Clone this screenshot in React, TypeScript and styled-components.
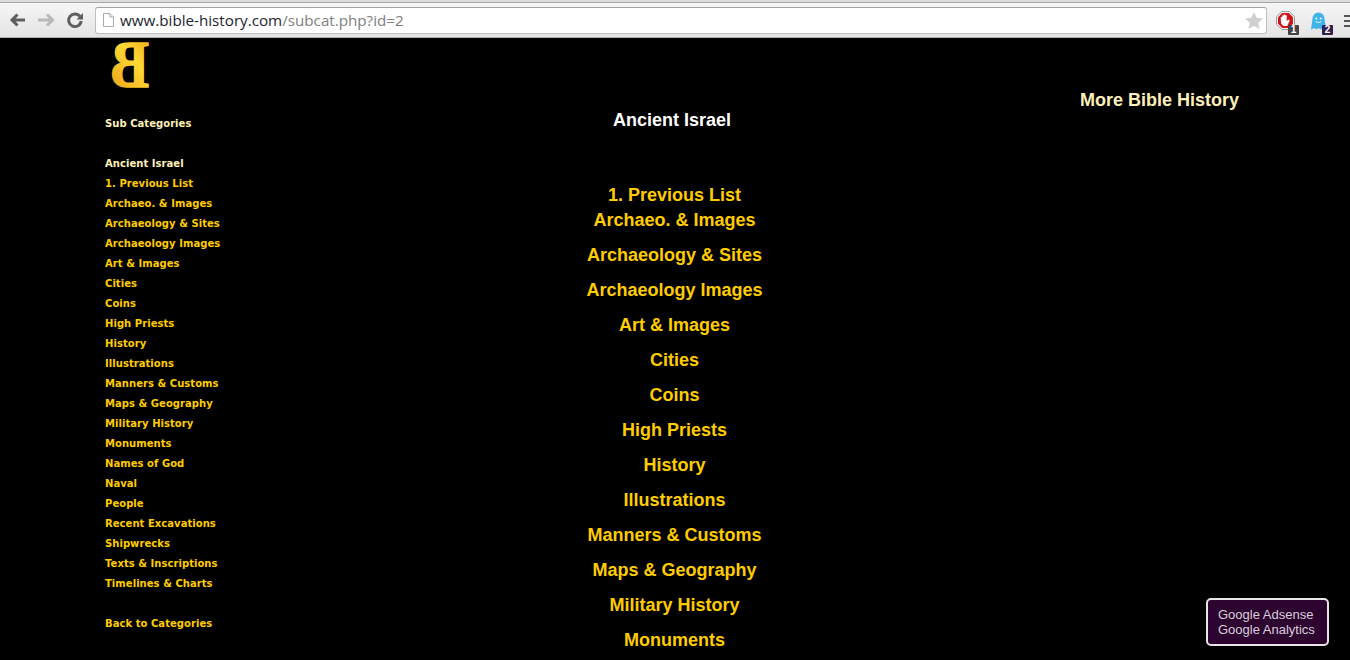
import React from 'react';
import styled, { createGlobalStyle } from 'styled-components';

const GlobalStyle = createGlobalStyle`
  html, body {
    margin: 0;
    height: 100%;
    overflow: hidden;
    background: #000;
  }
`;

const Page = styled.div`
  width: 1350px;
  height: 660px;
  overflow: hidden;
  display: flex;
  flex-direction: column;
  background: #000;
`;

const TabStrip = styled.div`
  height: 3px;
  flex: 0 0 3px;
  background: #dcdcdc;
  border-bottom: 1px solid #a8a8a8;
  box-sizing: border-box;
`;

const Toolbar = styled.div`
  flex: 0 0 35px;
  display: flex;
  align-items: center;
  box-sizing: border-box;
  padding-left: 8px;
  background: linear-gradient(#f6f6f6, #e4e4e4);
  border-bottom: 1px solid #b0b0b0;
`;

const NavIcon = styled.svg`
  width: 18px;
  height: 18px;
  margin-right: 11px;
  flex: none;
`;

const UrlBar = styled.div`
  width: 1172px;
  height: 27px;
  box-sizing: border-box;
  display: flex;
  align-items: center;
  gap: 6px;
  padding: 0 3px 0 7px;
  background: #fff;
  border: 1px solid #bdbdbd;
  border-top-color: #a3a3a3;
  border-radius: 3px;
  font: 15.2px 'Open Sans', 'Liberation Sans', sans-serif;
`;

const Url = styled.span`
  flex: 1;
  color: #808080;
  white-space: nowrap;
`;

const Host = styled.span`
  color: #1c2430;
`;

const ExtensionSlot = styled.div<{ $left: number }>`
  position: relative;
  flex: none;
  width: 18px;
  height: 19px;
  margin-left: ${(p) => p.$left}px;
`;

const Badge = styled.span<{ $bg: string }>`
  position: absolute;
  right: -5px;
  bottom: -5px;
  width: 11px;
  height: 10px;
  background: ${(p) => p.$bg};
  color: #fff;
  font: bold 10px/10px 'Liberation Sans', sans-serif;
  text-align: center;
  border-radius: 1px;
`;

const Content = styled.div`
  flex: 1;
  display: grid;
  grid-template-columns: 299.5px 540px 1fr;
  padding-left: 105px;
  min-height: 0;
`;

const Sidebar = styled.nav`
  display: flex;
  flex-direction: column;
  font: bold 10px/20px 'DejaVu Sans', Verdana, sans-serif;
  letter-spacing: 0.05px;
  color: #ffcc00;
`;

const Logo = styled.svg`
  width: 46px;
  height: 50px;
  margin: 3px 0 23px 5px;
  display: block;
  flex: none;
`;

const SideItem = styled.div<{ $gap?: number; $pale?: boolean }>`
  height: 20px;
  white-space: nowrap;
  margin-bottom: ${(p) => p.$gap || 0}px;
  color: ${(p) => (p.$pale ? '#fff0b8' : '#ffcc00')};
`;

const Main = styled.main`
  display: flex;
  flex-direction: column;
  align-items: center;
  font: bold 18px/25px 'Liberation Sans', Arial, sans-serif;
  color: #ffcc00;
  padding-top: 70px;
`;

const Title = styled.div`
  color: #fff;
  margin: 0 5px 0 0;
  height: 25px;
`;

const PreviousLink = styled.div`
  margin-top: 50px;
  height: 25px;
`;

const MainLink = styled.div`
  height: 35px;
`;

const Aside = styled.aside`
  padding: 50px 0 0 135.5px;
  font: bold 18px/25px 'Liberation Sans', Arial, sans-serif;
  color: #fff0b8;
  white-space: nowrap;
`;

const AdBox = styled.div`
  position: fixed;
  left: 1206px;
  top: 598px;
  width: 123px;
  height: 48px;
  box-sizing: border-box;
  padding: 7px 0 0 10px;
  background: #2d0330;
  border: 2px solid #e8e4e8;
  border-radius: 5px;
  color: #d8d0d8;
  font: 13px/15px 'Liberation Sans', Arial, sans-serif;
  white-space: nowrap;
`;

const MenuLines = styled.div`
  position: absolute;
  left: 1344px;
  top: 15px;
  width: 8px;
  height: 12px;
  background: repeating-linear-gradient(#555 0 2px, transparent 2px 5px);
`;

const categories = [
  'Archaeo. & Images',
  'Archaeology & Sites',
  'Archaeology Images',
  'Art & Images',
  'Cities',
  'Coins',
  'High Priests',
  'History',
  'Illustrations',
  'Manners & Customs',
  'Maps & Geography',
  'Military History',
  'Monuments',
  'Names of God',
  'Naval',
  'People',
  'Recent Excavations',
  'Shipwrecks',
  'Texts & Inscriptions',
  'Timelines & Charts',
];

export default function App() {
  return (
    <Page>
      <GlobalStyle />
      <TabStrip />
      <Toolbar>
        <NavIcon viewBox="0 0 18 18">
          <path d="M17 9H5M9.500 3.500 4 9l5.500 5.500" fill="none" stroke="#5f5f5f" strokeWidth="3" />
        </NavIcon>
        <NavIcon viewBox="0 0 18 18">
          <path d="M1 9h13M10 3.500 15.500 9 10 14.500" fill="none" stroke="#b8b8b8" strokeWidth="3" />
        </NavIcon>
        <NavIcon viewBox="0 0 18 18">
          <path d="M14 5.500A6.300 6.300 0 1 0 15.200 10" fill="none" stroke="#5f5f5f" strokeWidth="3" />
          <path d="M17 2v6.500h-6.500z" fill="#5f5f5f" />
        </NavIcon>
        <UrlBar>
          <svg width="11" height="14" viewBox="0 0 11 14">
            <path d="M.5.500h6.500l3.500 3.500v9.500H.5z" fill="#fff" stroke="#aaa" />
            <path d="M7 .5V4h3.500" fill="#eee" stroke="#aaa" />
          </svg>
          <Url>
            <Host>www.bible-history.com</Host>/subcat.php?id=2
          </Url>
          <svg width="18" height="17" viewBox="0 0 18 17">
            <path d="M9 0l2.700 5.800 6.300.7-4.700 4.300 1.300 6.200L9 13.900 3.400 17l1.300-6.200L0 6.500l6.300-.7z" fill="#cfcfcf" />
          </svg>
        </UrlBar>
        <ExtensionSlot $left={9}>
          <svg width="19" height="19" viewBox="0 0 19 19">
            <path d="M5.700.5h7.600l5.200 5.200v7.600l-5.200 5.200H5.700L.5 13.300V5.700z" fill="#f4f4f4" stroke="#9a9a9a" />
            <path d="M6.200 2h6.600L17 6.200v6.600L12.800 17H6.200L2 12.800V6.200z" fill="#d2141c" />
            <path d="M4.800 9.500V6h1.400v3.500V4.600h1.500v4.700V3.600h1.500v5.700V4.300h1.500v6l1.700-1.800 1.300 1-2.500 5.500H7.500C5.600 14 4.800 12 4.800 9.500z" fill="#fff" />
          </svg>
          <Badge $bg="#444">1</Badge>
        </ExtensionSlot>
        <ExtensionSlot $left={16}>
          <svg width="17" height="19" viewBox="0 0 17 19">
            <path d="M1 18.500 2.500 7.500a6 6 0 0 1 12 0L16 18.500l-3.500-1.500-2 1.500-2-1.500-2 1.500-2-1.500z" fill="#3fb4e8" />
            <circle cx="6.300" cy="7.500" r="1" fill="#fff" />
            <circle cx="10.700" cy="7.500" r="1" fill="#fff" />
            <path d="M5.800 10.500c1.500 1.300 3.900 1.300 5.400 0" fill="none" stroke="#fff" />
          </svg>
          <Badge $bg="#33204f">2</Badge>
        </ExtensionSlot>
        <MenuLines />
      </Toolbar>
      <Content>
        <Sidebar>
          <Logo viewBox="0 0 46 50">
            <defs>
              <linearGradient id="logoGold" x1="0" y1="0" x2="0.6" y2="1">
                <stop offset="0" stopColor="#eaa316" />
                <stop offset="0.5" stopColor="#ffd936" />
                <stop offset="1" stopColor="#eda819" />
              </linearGradient>
            </defs>
            <text
              transform="translate(39 0) scale(-0.84 1)"
              x="0"
              y="46"
              fontFamily="'Liberation Serif', serif"
              fontWeight="bold"
              fontSize="68"
              fill="url(#logoGold)"
              stroke="url(#logoGold)"
              strokeWidth="1.500"
            >
              B
            </text>
          </Logo>
          <SideItem $pale $gap={20}>Sub Categories</SideItem>
          <SideItem $pale>Ancient Israel</SideItem>
          <SideItem>1. Previous List</SideItem>
          {categories.map((c, i) => (
            <SideItem key={c} $gap={i === categories.length - 1 ? 20 : 0}>{c}</SideItem>
          ))}
          <SideItem>Back to Categories</SideItem>
        </Sidebar>
        <Main>
          <Title>Ancient Israel</Title>
          <PreviousLink>1. Previous List</PreviousLink>
          {categories.map((c) => (
            <MainLink key={c}>{c}</MainLink>
          ))}
        </Main>
        <Aside>More Bible History</Aside>
      </Content>
      <AdBox>
        Google Adsense
        <br />
        Google Analytics
      </AdBox>
    </Page>
  );
}
